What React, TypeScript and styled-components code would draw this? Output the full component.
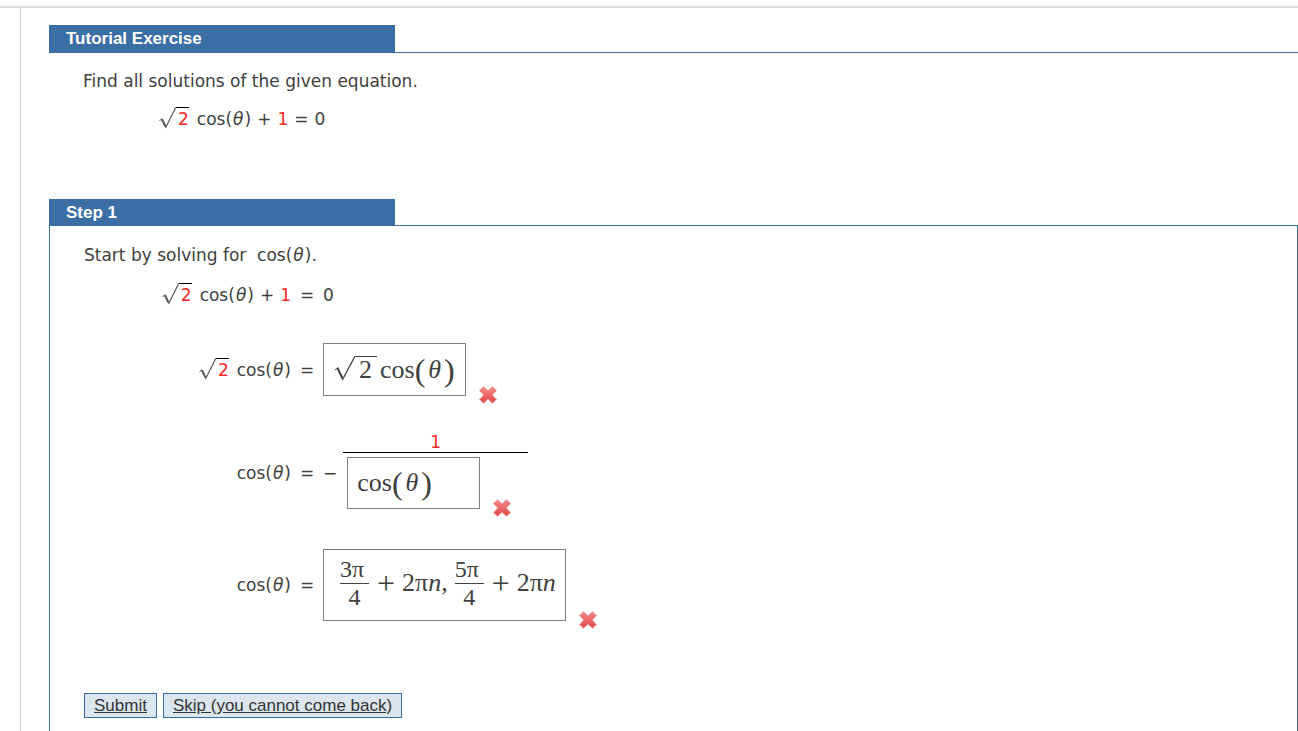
import React from "react";
import styled, { createGlobalStyle } from "styled-components";

const blue = "#3b6ea5";
const ink = "#404040";
const red = "#f5281e";

const GlobalStyle = createGlobalStyle`
  *, *::before, *::after { box-sizing: border-box; }
  body {
    margin: 0;
    background: #fff;
    color: ${ink};
    font: 17px/24px "DejaVu Sans", Verdana, sans-serif;
  }
`;

const Page = styled.div`
  display: flex;
  flex-direction: column;
  min-height: 100vh;
  padding-top: 6px;
`;

const Frame = styled.main`
  display: flex;
  flex: 1;
  padding-left: 20px;
  border-top: 2px solid #dcdcdc;
`;

const Content = styled.div`
  display: flex;
  flex: 1;
  flex-direction: column;
  padding: 17px 0 0 28px;
  border-left: 1px solid #cccccc;
`;

const Header = styled.header`
  border-bottom: 1px solid ${blue};
`;

const Title = styled.h2<{ $height: number }>`
  width: 346px;
  max-width: 100%;
  height: ${(p) => p.$height}px;
  margin: 0;
  padding: 0 17px;
  background: ${blue};
  color: #fff;
  font: bold 17px/27px "Liberation Sans", Arial, sans-serif;
`;

const Exercise = styled.section`
  margin-bottom: 68px;
`;

const ExerciseBody = styled.div`
  padding: 16px 34px 0;
`;

const Step = styled.section`
  display: flex;
  flex: 1;
  flex-direction: column;
`;

const StepBody = styled.div`
  flex: 1;
  padding: 17px 34px 12px;
  border: solid ${blue};
  border-width: 0 1px;
`;

const Text = styled.p<{ $gap: number }>`
  margin: 0 0 ${(p) => p.$gap}px;
`;

const Formula = styled.div`
  display: flex;
  padding-left: 76px;
`;

const Math = styled.span`
  display: inline-flex;
  align-items: center;
  white-space: pre;
`;

const Red = styled.span`
  color: ${red};
`;

const Operator = styled.span`
  margin: 0 6px;
`;

const Theta = styled.i`
  margin: 0 1px;
  font-style: oblique;
`;

const RootWrap = styled.span<{ $large?: boolean }>`
  display: inline-flex;
  margin-right: ${(p) => (p.$large ? "3px" : "8px")};
`;

const RootSign = styled.svg`
  display: block;
  flex: none;
`;

const Radicand = styled.span<{ $large?: boolean }>`
  height: ${(p) => (p.$large ? "28px" : "24px")};
  padding: ${(p) => (p.$large ? "0 5px 0 4px" : "0 0 0 2px")};
  border-top: 1px solid ${(p) => (p.$large ? ink : "#000")};
  color: ${(p) => (p.$large ? "inherit" : red)};
  line-height: ${(p) => (p.$large ? "26px" : "23px")};
`;

const Equations = styled.div`
  display: grid;
  grid-template-columns: 207px 14px auto;
  justify-content: start;
  align-items: center;
  gap: 36px 9px;
`;

const Side = styled.div`
  display: flex;
  justify-content: flex-end;
`;

const Value = styled.div`
  display: flex;
  align-items: center;
`;

const Graded = styled.div`
  display: flex;
  align-items: flex-end;
  gap: 13px;
`;

const boxes = {
  normal: { width: 143, height: 53, bottom: 0 },
  short: { width: 133, height: 52, bottom: 0 },
  tall: { width: 143, height: 72, bottom: 4 },
};

const Answer = styled.output<{ $size: keyof typeof boxes }>`
  display: flex;
  align-items: center;
  min-width: ${(p) => boxes[p.$size].width}px;
  height: ${(p) => boxes[p.$size].height}px;
  padding: 0 9px ${(p) => boxes[p.$size].bottom}px;
  border: 1px solid #808080;
  font: 26px/28px "Liberation Serif", "Times New Roman", serif;
  white-space: pre;
`;

const Paren = styled.span`
  font-size: 32px;
`;

const SerifTheta = styled.i`
  margin: 0 3px;
`;

const Cross = styled.svg`
  flex: none;
  margin-bottom: -8px;
`;

const Over = styled.div`
  display: flex;
  flex-direction: column;
  align-items: center;
  margin-left: 6px;
  padding-bottom: 4px;
`;

const Numerator = styled.div`
  color: ${red};
  line-height: 20px;
`;

const Denominator = styled.div`
  padding: 4px 17px 0 4px;
  border-top: 1px solid #000;
`;

const Fraction = styled.span`
  display: inline-flex;
  flex-direction: column;
  align-items: center;
  width: 29px;
  margin: 0 8px 0 7px;
  font-size: 24px;
  line-height: 27px;
`;

const Top = styled.span`
  align-self: stretch;
  border-bottom: 1px solid ${ink};
`;

const Plus = styled.span`
  width: 25px;
  font-size: 32px;
`;

const Actions = styled.div`
  display: flex;
  flex-wrap: wrap;
  gap: 6px;
  margin-top: 72px;
`;

const Button = styled.button`
  height: 25px;
  padding: 0 9px;
  border: 1px solid ${blue};
  border-radius: 0;
  background: #dce6ee;
  color: #333;
  font: 17px/22px "Liberation Sans", Arial, sans-serif;
  text-decoration: underline;
  cursor: pointer;
`;

const CosTheta = () => (
  <span>
    cos(<Theta>θ</Theta>)
  </span>
);

const Root = ({ large }: { large?: boolean }) => (
  <RootWrap $large={large}>
    {large ? (
      <RootSign width="22" height="28" viewBox="0 0 22 28" fill="none" stroke={ink}>
        <path d="M2 14 5 11.5" strokeWidth="1" />
        <path d="M4.5 12 9.5 22.5" strokeWidth="2" />
        <path d="M9.3 24 21.8 .5" strokeWidth="1.3" />
      </RootSign>
    ) : (
      <RootSign width="17" height="24" viewBox="0 0 17 24" fill="none" stroke="#555">
        <path d="M.5 13.5 3 12" strokeWidth="1" />
        <path d="M2.8 12 6.5 19.5" strokeWidth="2" />
        <path d="M6.5 21 16.7 .5" strokeWidth="1.2" />
      </RootSign>
    )}
    <Radicand $large={large}>2</Radicand>
  </RootWrap>
);

const LeftTerm = () => (
  <Math>
    <Root />
    <CosTheta />
  </Math>
);

const SerifCos = () => (
  <Math>
    cos<Paren>(</Paren>
    <SerifTheta>θ</SerifTheta>
    <Paren>)</Paren>
  </Math>
);

const Wrong = () => (
  <Cross width="18" height="18" viewBox="0 0 18 18" role="img" aria-label="Incorrect">
    <defs>
      <linearGradient id="cross" x1="0" y1="0" x2="0" y2="1">
        <stop offset="0" stopColor="#f58a88" />
        <stop offset="1" stopColor="#e0474a" />
      </linearGradient>
    </defs>
    <path
      d="M.5 4.5 4.5 .8 9 4.8 13.5 .8 17.5 4.5 13.3 9 17.5 13.5 13.5 17.2 9 13.2 4.5 17.2 .5 13.5 4.7 9Z"
      fill="url(#cross)"
      stroke="#f29a98"
      strokeLinejoin="round"
    />
  </Cross>
);

const PiTerm = ({ n, end }: { n: string; end: string }) => (
  <>
    <Fraction>
      <Top>{n}π</Top>
      <span>4</span>
    </Fraction>
    <Plus>+</Plus>
    <span>
      2π<i>n</i>
      {end}
    </span>
  </>
);

export default function App() {
  return (
    <Page>
      <GlobalStyle />
      <Frame>
        <Content>
          <Exercise>
            <Header>
              <Title $height={27}>Tutorial Exercise</Title>
            </Header>
            <ExerciseBody>
              <Text $gap={14}>Find all solutions of the given equation.</Text>
              <Formula>
                <LeftTerm />
                <Operator>+</Operator>
                <Red>1</Red>
                <Operator>=</Operator>0
              </Formula>
            </ExerciseBody>
          </Exercise>

          <Step>
            <Header>
              <Title $height={26}>Step 1</Title>
            </Header>
            <StepBody>
              <Text $gap={16}>
                Start by solving for&nbsp; <CosTheta />.
              </Text>
              <Equations>
                <Side>
                  <LeftTerm />
                  <Operator>+</Operator>
                  <Red>1</Red>
                </Side>
                <span>=</span>
                <Value>0</Value>

                <Side>
                  <LeftTerm />
                </Side>
                <span>=</span>
                <Graded>
                  <Answer $size="normal">
                    <Root large />
                    <SerifCos />
                  </Answer>
                  <Wrong />
                </Graded>

                <Side>
                  <CosTheta />
                </Side>
                <span>=</span>
                <Value>
                  −
                  <Over>
                    <Numerator>1</Numerator>
                    <Denominator>
                      <Graded>
                        <Answer $size="short">
                          <SerifCos />
                        </Answer>
                        <Wrong />
                      </Graded>
                    </Denominator>
                  </Over>
                </Value>

                <Side>
                  <CosTheta />
                </Side>
                <span>=</span>
                <Graded>
                  <Answer $size="tall">
                    <PiTerm n="3" end="," />
                    <PiTerm n="5" end="" />
                  </Answer>
                  <Wrong />
                </Graded>
              </Equations>
              <Actions>
                <Button type="button">Submit</Button>
                <Button type="button">Skip (you cannot come back)</Button>
              </Actions>
            </StepBody>
          </Step>
        </Content>
      </Frame>
    </Page>
  );
}
